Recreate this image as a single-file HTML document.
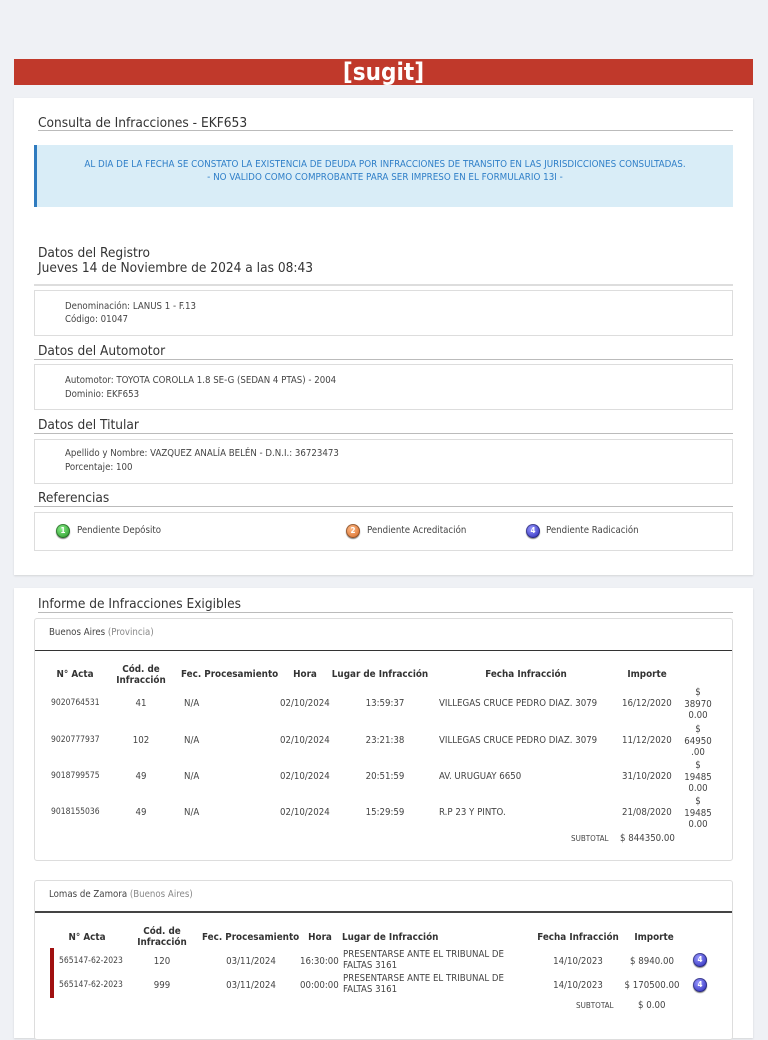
<!DOCTYPE html>
<html><head><meta charset="utf-8"><style>
*{margin:0;padding:0;box-sizing:border-box}
body{width:768px;height:1024px;overflow:hidden;background:#eff1f5;font-family:"DejaVu Sans Condensed","DejaVu Sans","Liberation Sans",sans-serif;color:#333;position:relative}
.a{position:absolute;white-space:nowrap}
.card{position:absolute;left:14px;width:739px;background:#fff;box-shadow:0 1px 2px rgba(0,0,0,.12)}
.h{position:absolute;font-size:13.6px;color:#333}
.ln{position:absolute;left:38px;width:695px;height:1px;background:#bbb}
.box{position:absolute;left:34px;width:699px;border:1px solid #ddd;background:#fff}
.t{position:absolute;font-size:9.6px;color:#444;white-space:nowrap}
.th{position:absolute;font-size:9.8px;font-weight:bold;color:#333;white-space:nowrap;text-align:center;line-height:11px}
.c{transform:translateX(-50%);text-align:center}
.ic{position:absolute;width:14px;height:14px;border-radius:50%;color:#fff;font-size:8px;font-weight:bold;text-align:center;line-height:14px;box-shadow:0 1px 1px rgba(0,0,0,.5),inset 0 0 0 1px rgba(0,0,0,.35)}
</style></head><body>
<div class="a" style="left:14px;top:59px;width:739px;height:26px;background:#c0392b;color:#fff;font:bold 24px 'DejaVu Sans Condensed','DejaVu Sans',sans-serif;text-align:center;line-height:26px">[sugit]</div>

<div class="card" style="top:98px;height:477px"></div>
<div class="h" style="left:38px;top:115px">Consulta de Infracciones - EKF653</div>
<div class="ln" style="top:130px"></div>
<div class="a" style="left:34px;top:145px;width:699px;height:62px;background:#d9edf7;border-left:3px solid #2f7bbf"></div>
<div class="a" style="left:34px;top:158px;width:702px;text-align:center;font-size:9.75px;color:#2f7fc8;line-height:13px">AL DIA DE LA FECHA SE CONSTATO LA EXISTENCIA DE DEUDA POR INFRACCIONES DE TRANSITO EN LAS JURISDICCIONES CONSULTADAS.<br>- NO VALIDO COMO COMPROBANTE PARA SER IMPRESO EN EL FORMULARIO 13I -</div>

<div class="h" style="left:38px;top:246px;line-height:14.5px">Datos del Registro<br>Jueves 14 de Noviembre de 2024 a las 08:43</div>
<div class="ln" style="left:34px;width:699px;top:284px;height:2px;background:#ddd"></div>
<div class="box" style="top:290px;height:46px"></div>
<div class="t" style="left:65px;top:300px;line-height:13px">Denominación: LANUS 1 - F.13<br>Código: 01047</div>

<div class="h" style="left:38px;top:343px">Datos del Automotor</div>
<div class="ln" style="left:34px;width:699px;top:359px"></div>
<div class="box" style="top:364px;height:46px"></div>
<div class="t" style="left:65px;top:374px;line-height:13.5px">Automotor: TOYOTA COROLLA 1.8 SE-G (SEDAN 4 PTAS) - 2004<br>Dominio: EKF653</div>

<div class="h" style="left:38px;top:417px">Datos del Titular</div>
<div class="ln" style="left:34px;width:699px;top:433px"></div>
<div class="box" style="top:439px;height:45px"></div>
<div class="t" style="left:65px;top:447px;line-height:13.5px">Apellido y Nombre: VAZQUEZ ANALÍA BELÉN - D.N.I.: 36723473<br>Porcentaje: 100</div>

<div class="h" style="left:38px;top:490px">Referencias</div>
<div class="ln" style="left:34px;width:699px;top:506px"></div>
<div class="box" style="top:512px;height:39px"></div>
<div class="ic" style="left:56px;top:524px;background:radial-gradient(circle at 40% 35%,#8e8,#1a8a1a)">1</div>
<div class="t" style="left:77px;top:525px">Pendiente Depósito</div>
<div class="ic" style="left:346px;top:524px;background:radial-gradient(circle at 40% 35%,#fb8,#d0601a)">2</div>
<div class="t" style="left:367px;top:525px">Pendiente Acreditación</div>
<div class="ic" style="left:526px;top:524px;background:radial-gradient(circle at 40% 35%,#99f,#1a1ab0)">4</div>
<div class="t" style="left:546px;top:525px">Pendiente Radicación</div>

<div class="card" style="top:588px;height:450px"></div>
<div class="h" style="left:38px;top:596px">Informe de Infracciones Exigibles</div>
<div class="ln" style="top:612px"></div>

<div class="box" style="top:618px;height:243px;border-radius:3px"></div>
<div class="t" style="left:49px;top:627px;color:#444">Buenos Aires <span style="color:#888">(Provincia)</span></div>
<div class="a" style="left:35px;top:650px;width:697px;height:1px;background:#333"></div>
<div class="th c" style="left:75px;top:669px">N° Acta</div>
<div class="th c" style="left:141px;top:664px">Cód. de<br>Infracción</div>
<div class="th" style="left:181px;top:669px">Fec. Procesamiento</div>
<div class="th c" style="left:305px;top:669px">Hora</div>
<div class="th c" style="left:380px;top:669px">Lugar de Infracción</div>
<div class="th c" style="left:526px;top:669px">Fecha Infracción</div>
<div class="th c" style="left:647px;top:669px">Importe</div>

<div class="t" style="left:51px;top:698px;font-size:8.5px">9020764531</div><div class="t c" style="left:141px;top:698px">41</div><div class="t" style="left:184px;top:698px">N/A</div><div class="t" style="left:280px;top:698px">02/10/2024</div><div class="t c" style="left:385px;top:698px">13:59:37</div><div class="t" style="left:439px;top:698px">VILLEGAS CRUCE PEDRO DIAZ. 3079</div><div class="t" style="left:622px;top:698px">16/12/2020</div><div class="t c" style="left:698px;top:687px;line-height:11.5px">$<br>38970<br>0.00</div>
<div class="t" style="left:51px;top:735px;font-size:8.5px">9020777937</div><div class="t c" style="left:141px;top:735px">102</div><div class="t" style="left:184px;top:735px">N/A</div><div class="t" style="left:280px;top:735px">02/10/2024</div><div class="t c" style="left:385px;top:735px">23:21:38</div><div class="t" style="left:439px;top:735px">VILLEGAS CRUCE PEDRO DIAZ. 3079</div><div class="t" style="left:622px;top:735px">11/12/2020</div><div class="t c" style="left:698px;top:724px;line-height:11.5px">$<br>64950<br>.00</div>
<div class="t" style="left:51px;top:771px;font-size:8.5px">9018799575</div><div class="t c" style="left:141px;top:771px">49</div><div class="t" style="left:184px;top:771px">N/A</div><div class="t" style="left:280px;top:771px">02/10/2024</div><div class="t c" style="left:385px;top:771px">20:51:59</div><div class="t" style="left:439px;top:771px">AV. URUGUAY 6650</div><div class="t" style="left:622px;top:771px">31/10/2020</div><div class="t c" style="left:698px;top:760px;line-height:11.5px">$<br>19485<br>0.00</div>
<div class="t" style="left:51px;top:807px;font-size:8.5px">9018155036</div><div class="t c" style="left:141px;top:807px">49</div><div class="t" style="left:184px;top:807px">N/A</div><div class="t" style="left:280px;top:807px">02/10/2024</div><div class="t c" style="left:385px;top:807px">15:29:59</div><div class="t" style="left:439px;top:807px">R.P 23 Y PINTO.</div><div class="t" style="left:622px;top:807px">21/08/2020</div><div class="t c" style="left:698px;top:796px;line-height:11.5px">$<br>19485<br>0.00</div>
<div class="t" style="left:571px;top:834px;font-size:8px">SUBTOTAL</div><div class="t" style="left:620px;top:833px">$ 844350.00</div>

<div class="box" style="top:880px;height:160px;border-radius:3px"></div>
<div class="t" style="left:49px;top:889px">Lomas de Zamora <span style="color:#888">(Buenos Aires)</span></div>
<div class="a" style="left:35px;top:911px;width:697px;height:2px;background:#444"></div>
<div class="th c" style="left:87px;top:932px">N° Acta</div>
<div class="th c" style="left:162px;top:926px">Cód. de<br>Infracción</div>
<div class="th" style="left:202px;top:932px">Fec. Procesamiento</div>
<div class="th c" style="left:320px;top:932px">Hora</div>
<div class="th" style="left:342px;top:932px">Lugar de Infracción</div>
<div class="th c" style="left:578px;top:932px">Fecha Infracción</div>
<div class="th c" style="left:654px;top:932px">Importe</div>
<div class="a" style="left:50px;top:948px;width:4px;height:50px;background:#a01010"></div>
<div class="t" style="left:59px;top:956px;font-size:8.5px">565147-62-2023</div><div class="t c" style="left:162px;top:956px">120</div><div class="t c" style="left:251px;top:956px">03/11/2024</div><div class="t" style="left:300px;top:956px">16:30:00</div><div class="t" style="left:343px;top:950px;line-height:10.5px">PRESENTARSE ANTE EL TRIBUNAL DE<br>FALTAS 3161</div><div class="t c" style="left:578px;top:956px">14/10/2023</div><div class="t c" style="left:652px;top:956px">$ 8940.00</div>
<div class="ic" style="left:693px;top:953px;background:radial-gradient(circle at 40% 35%,#99f,#1a1ab0)">4</div>
<div class="t" style="left:59px;top:980px;font-size:8.5px">565147-62-2023</div><div class="t c" style="left:162px;top:980px">999</div><div class="t c" style="left:251px;top:980px">03/11/2024</div><div class="t" style="left:300px;top:980px">00:00:00</div><div class="t" style="left:343px;top:974px;line-height:10.5px">PRESENTARSE ANTE EL TRIBUNAL DE<br>FALTAS 3161</div><div class="t c" style="left:578px;top:980px">14/10/2023</div><div class="t c" style="left:652px;top:980px">$ 170500.00</div>
<div class="ic" style="left:693px;top:978px;background:radial-gradient(circle at 40% 35%,#99f,#1a1ab0)">4</div>
<div class="t" style="left:576px;top:1001px;font-size:8px">SUBTOTAL</div><div class="t" style="left:638px;top:1000px">$ 0.00</div>
</body></html>
